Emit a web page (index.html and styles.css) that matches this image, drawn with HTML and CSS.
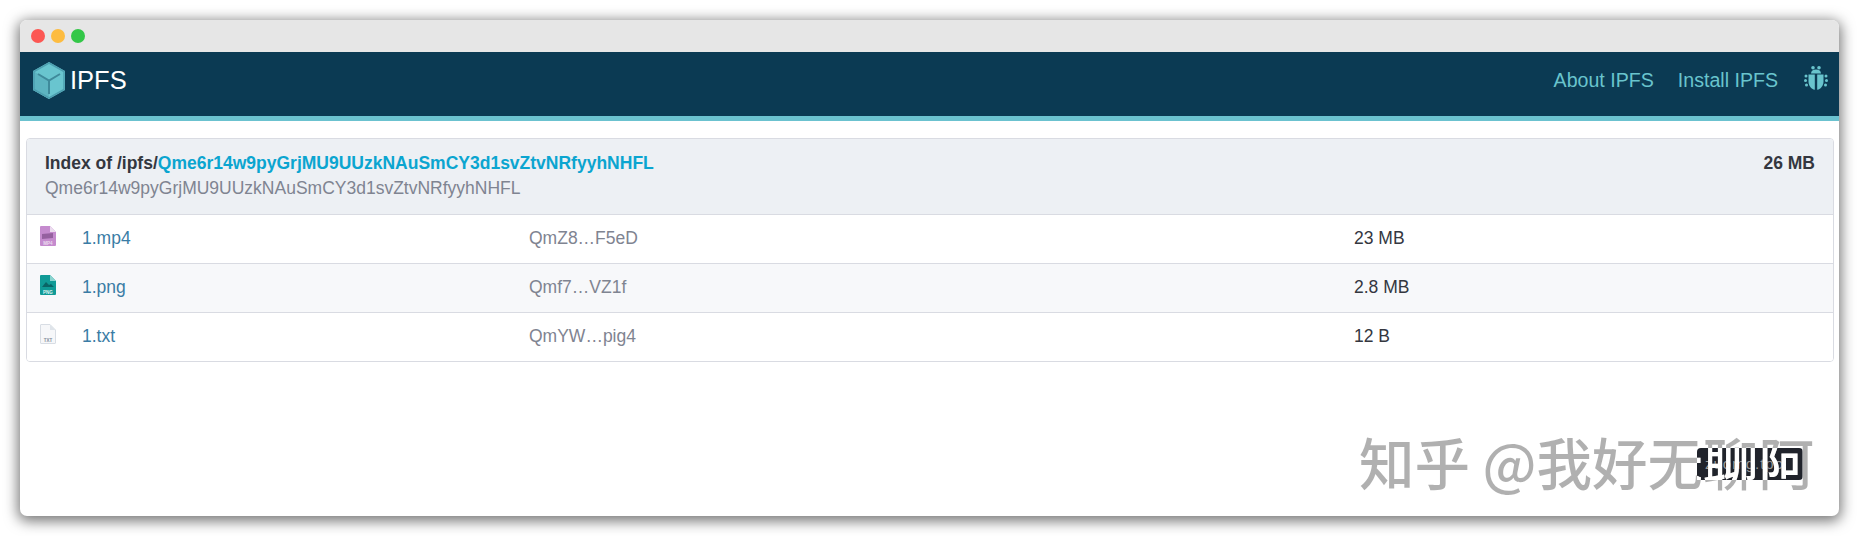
FILE: index.html
```html
<!DOCTYPE html>
<html lang="en">
  <head>
    <meta charset="UTF-8" />
    <title>Index of /ipfs/Qme6r14w9pyGrjMU9UUzkNAuSmCY3d1svZtvNRfyyhNHFL</title>
    <link rel="stylesheet" href="styles.css">
  </head>
  <body>
    <div class="window">
      <div class="titlebar">
        <span class="dot dot-red"></span>
        <span class="dot dot-yellow"></span>
        <span class="dot dot-green"></span>
      </div>

      <nav class="navbar">
        <a class="brand" href="#">
          <svg class="cube" viewBox="0 0 32 37" width="32" height="37">
            <path d="M16 0 32 9V28L16 37 0 28V9Z" fill="#69c5cf" />
            <path d="M0 9 16 18V37L0 28Z" fill="#5db4c1" />
            <path d="M16 1 31 9.500V27.500L16 36 1 27.500V9.500Z" fill="none" stroke="#4d9fb0" stroke-width="1.500" />
            <path d="M5 12 16 18.500 27 12M16 18.500V32" fill="none" stroke="#3f8a9b" stroke-width="2" />
          </svg>
          <span>IPFS</span>
        </a>
        <div class="nav-links">
          <a href="#">About IPFS</a>
          <a href="#">Install IPFS</a>
          <svg class="bug" viewBox="0 0 24 24" width="24" height="24" fill="#69c4cd">
            <circle cx="9" cy="1.800" r="1.800" />
            <circle cx="15" cy="1.800" r="1.800" />
            <path d="M7 7.500C7 5 9 3.500 12 3.500S17 5 17 7.500Z" />
            <path d="M4.500 8.500H10.800V23.800C7 23 4.500 19.500 4.500 15.500Z" />
            <path d="M19.500 8.500H13.200V23.800C17 23 19.500 19.500 19.500 15.500Z" />
            <circle cx="2" cy="10" r="1.500" />
            <circle cx="1.500" cy="14.500" r="1.500" />
            <circle cx="2.500" cy="19" r="1.500" />
            <circle cx="22" cy="10" r="1.500" />
            <circle cx="22.500" cy="14.500" r="1.500" />
            <circle cx="21.500" cy="19" r="1.500" />
          </svg>
        </div>
      </nav>

      <main class="content">
        <div class="panel">
          <div class="panel-head">
            <div>
              <div class="index-path">Index of /ipfs/<a href="#">Qme6r14w9pyGrjMU9UUzkNAuSmCY3d1svZtvNRfyyhNHFL</a></div>
              <div class="index-hash">Qme6r14w9pyGrjMU9UUzkNAuSmCY3d1svZtvNRfyyhNHFL</div>
            </div>
            <div class="index-size">26 MB</div>
          </div>

          <div class="file-row">
            <svg class="file-icon" viewBox="0 0 16 20" width="16" height="20">
              <path d="M0 1Q0 0 1 0H10L16 6V19Q16 20 15 20H1Q0 20 0 19Z" fill="#c58bce" />
              <path d="M10 0 16 6H10Z" fill="#ecdcef" />
              <path d="M2 8 13 7V12L2 13Z" fill="#95609f" />
              <text class="icon-label" x="8" y="18.500" fill="#ecdcef">MP4</text>
            </svg>
            <a class="file-name" href="#">1.mp4</a>
            <span class="file-hash">QmZ8…F5eD</span>
            <span class="file-size">23 MB</span>
          </div>
          <div class="file-row file-row-alt">
            <svg class="file-icon" viewBox="0 0 16 20" width="16" height="20">
              <path d="M0 1Q0 0 1 0H10L16 6V19Q16 20 15 20H1Q0 20 0 19Z" fill="#109a96" />
              <path d="M10 0 16 6H10Z" fill="#8ad4cf" />
              <path d="M2 12 6 7 9 10 11 9 14 12Z" fill="#0a6466" />
              <text class="icon-label" x="8" y="18.500" fill="#e2f5f3">PNG</text>
            </svg>
            <a class="file-name" href="#">1.png</a>
            <span class="file-hash">Qmf7…VZ1f</span>
            <span class="file-size">2.8 MB</span>
          </div>
          <div class="file-row">
            <svg class="file-icon" viewBox="0 0 16 20" width="16" height="20">
              <path d="M0.500 1Q0.500 0.500 1 0.500H10L15.500 6V19Q15.500 19.500 15 19.500H1Q0.500 19.500 0.500 19Z" fill="#f6f7f9" stroke="#d8dde4" />
              <path d="M10 0.500 15.500 6H10Z" fill="#dfe4ea" />
              <text class="icon-label" x="8" y="18" fill="#7f8a98">TXT</text>
            </svg>
            <a class="file-name" href="#">1.txt</a>
            <span class="file-hash">QmYW…pig4</span>
            <span class="file-size">12 B</span>
          </div>
        </div>
      </main>

      <div class="badge">zuomg.tpo</div>
      <div class="watermark">知乎 @我好无聊阿</div>
    </div>
  </body>
</html>
```

FILE: styles.css
```css
html,
body {
  margin: 0;
  height: 536px;
  overflow: hidden;
  background-color: #fff;
}
body {
  padding: 20px;
  box-sizing: border-box;
  font-family: "Liberation Sans", Arial, sans-serif;
  font-size: 17.5px;
  color: #34373f;
}
a {
  text-decoration: none;
}
.window {
  position: relative;
  height: 496px;
  background-color: #fff;
  border-radius: 7px;
  box-shadow: 0 3px 14px 2px rgba(0, 0, 0, 0.55);
  overflow: hidden;
}
.titlebar {
  height: 32px;
  padding-left: 11px;
  display: flex;
  align-items: center;
  gap: 6px;
  background-color: #e6e6e6;
}
.dot {
  width: 14px;
  height: 14px;
  border-radius: 50%;
}
.dot-red {
  background-color: #fc5753;
}
.dot-yellow {
  background-color: #fdbc40;
}
.dot-green {
  background-color: #33c748;
}
.navbar {
  height: 56px;
  padding: 0 11px 8px 13px;
  display: flex;
  align-items: center;
  justify-content: space-between;
  background-color: #0b3a53;
  border-bottom: 5px solid #6bc2cf;
}
.brand {
  display: flex;
  align-items: center;
  gap: 5px;
  font-size: 25.5px;
  color: #fff;
}
.nav-links {
  display: flex;
  align-items: center;
  gap: 24px;
  font-size: 19.6px;
}
.nav-links a {
  color: #69c4cd;
}
.bug {
  margin: -4px 0 0 2px;
}
.content {
  padding: 17px 5px 0 6px;
}
.panel {
  border: 1px solid #d9dbe2;
  border-radius: 4px;
  overflow: hidden;
}
.panel-head {
  height: 75px;
  padding: 12px 18px 0;
  box-sizing: border-box;
  display: flex;
  justify-content: space-between;
  background-color: #edf0f4;
  line-height: 25px;
}
.index-path,
.index-size {
  font-weight: bold;
}
.index-path a {
  color: #0ba5d0;
}
.index-hash {
  color: #7f8491;
}
.file-row {
  height: 47px;
  padding-bottom: 1px;
  border-top: 1px solid #d9dbe2;
  display: grid;
  grid-template-columns: 55px 447px 825px 1fr;
  align-items: center;
  background-color: #fff;
}
.file-row-alt {
  background-color: #f7f8fa;
}
.file-icon {
  margin: -5px 0 0 13px;
}
.icon-label {
  font-size: 4.500px;
  font-weight: bold;
  text-anchor: middle;
}
.file-name {
  color: #3a7ca5;
}
.file-hash {
  color: #7f8491;
}
.badge {
  position: absolute;
  right: 36px;
  bottom: 36px;
  width: 106px;
  height: 32px;
  padding-left: 8px;
  box-sizing: border-box;
  border-radius: 4px;
  background-color: #20232b;
  color: #999;
  font-size: 15px;
  letter-spacing: 1px;
  line-height: 32px;
}
/* white where it crosses the badge, grey everywhere else */
.watermark {
  position: absolute;
  right: 25px;
  bottom: 19px;
  font-family: "Noto Sans CJK SC", sans-serif;
  font-size: 55.5px;
  font-weight: 500;
  line-height: 72px;
  white-space: nowrap;
  color: transparent;
  background:
    linear-gradient(#fff, #fff) right 11px top 23px / 106px 32px no-repeat,
    linear-gradient(#b0b0b0, #b0b0b0);
  -webkit-background-clip: text;
  background-clip: text;
}
```
